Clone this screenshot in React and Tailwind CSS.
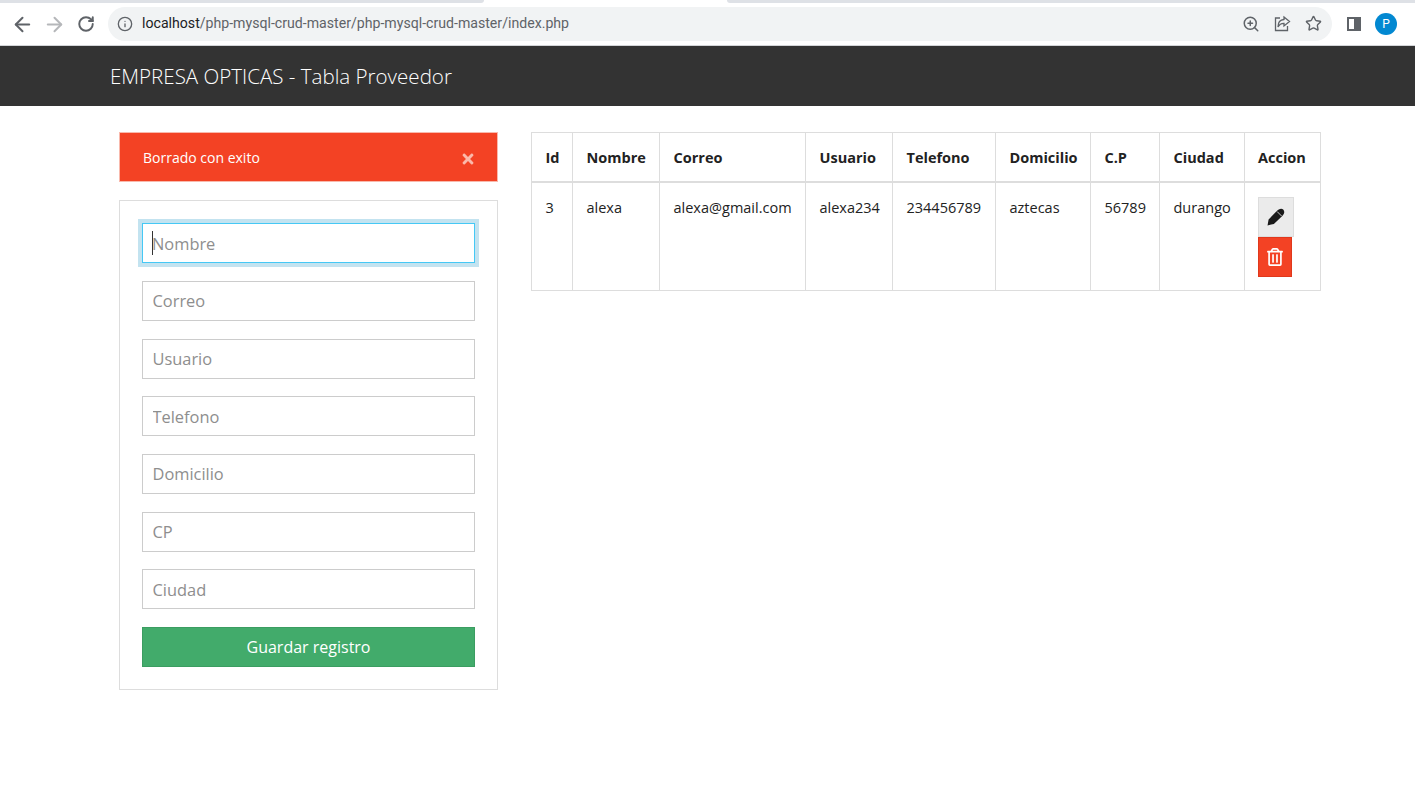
import { ArrowLeft, ArrowRight, RotateCw, Info, ZoomIn, Star } from "lucide-react";
import { FaTimes, FaRegTrashAlt } from "react-icons/fa";

const campos = ["Correo", "Usuario", "Telefono", "Domicilio", "CP", "Ciudad"];

const columnas = [
  { titulo: "Id", valor: "3", ancho: "w-[41px]" },
  { titulo: "Nombre", valor: "alexa", ancho: "w-[87px]" },
  { titulo: "Correo", valor: "alexa@gmail.com", ancho: "w-[146px]" },
  { titulo: "Usuario", valor: "alexa234", ancho: "w-[87px]" },
  { titulo: "Telefono", valor: "234456789", ancho: "w-[103px]" },
  { titulo: "Domicilio", valor: "aztecas", ancho: "w-[95px]" },
  { titulo: "C.P", valor: "56789", ancho: "w-[69px]" },
  { titulo: "Ciudad", valor: "durango", ancho: "w-[85px]" },
];

const BarraNavegador = () => {
  return (
    <div className="h-[46px] bg-white border-b border-[#d3d5d8] flex flex-col font-['Roboto',sans-serif]">
      <div className="h-[3px] flex">
        <div className="w-[484px] bg-[#dee1e6] rounded-br-md"></div>
        <div className="w-[243px]"></div>
        <div className="flex-1 bg-[#dee1e6] rounded-bl-md"></div>
      </div>
      <div className="flex-1 flex items-center">
        <div className="w-[108px] flex items-center pl-[6px]">
          <div className="w-8 flex justify-center"><ArrowLeft size={23} strokeWidth={2.1} className="text-[#5f6368]" /></div>
          <div className="w-8 flex justify-center"><ArrowRight size={23} strokeWidth={2.1} className="text-[#b5b7ba]" /></div>
          <div className="w-8 flex justify-center"><RotateCw size={18} strokeWidth={2.6} className="text-[#5f6368]" /></div>
        </div>
        <div className="w-[1224px] h-[34px] bg-[#f1f3f4] rounded-full flex items-center pl-[9px] pr-[10px] mt-[-1px]">
          <Info size={16} strokeWidth={2} className="text-[#5f6368] mr-[9px]" />
          <span className="text-[14.13px] text-[#5f6368] whitespace-nowrap">
            <span className="text-[#202124]">localhost</span>/php-mysql-crud-master/php-mysql-crud-master/index.php
          </span>
          <div className="ml-auto flex items-center gap-[14px] text-[#5f6368]">
            <ZoomIn size={18} strokeWidth={2} />
            <svg width="17" height="17" viewBox="0 0 17 17" fill="none" stroke="currentColor" strokeWidth="1.3">
              <path d="M6 3H1.500v12.500h12V11" />
              <path d="M10 2l5.500 4.500L10 11V8.300C7.500 8.200 5.300 9.500 4 12c0-4.500 2.500-7.300 6-7.500z" />
            </svg>
            <Star size={17} strokeWidth={2} />
          </div>
        </div>
        <div className="flex-1 flex items-center pl-[15px] gap-[14px] mt-[-1px]">
          <div className="w-[14px] h-[14px] border-2 border-[#5f6368] flex justify-end">
            <div className="w-[5px] bg-[#5f6368]"></div>
          </div>
          <div className="w-[22px] h-[22px] rounded-full bg-[#0288d1] text-white text-[12px] flex items-center justify-center">P</div>
        </div>
      </div>
    </div>
  );
};

const Formulario = () => {
  return (
    <div className="w-[379px] shrink-0">
      <div className="h-[50px] bg-[#f34224] border border-[#f9b9ac] flex items-center justify-between pl-[23px] pr-[21px] text-white text-[14px]">
        <span>Borrado con exito</span>
        <FaTimes size={16} className="text-[#fbb9ab] mt-[3px]" />
      </div>
      <div className="mt-[18px] h-[490px] border border-[#dddddd] pt-[22.15px] px-[22px] flex flex-col gap-[17.71px]">
        <div className="h-[40px] shrink-0 border border-[#45c8f5] shadow-[0_0_0_4px_#c3e3f0] flex items-center pl-[9px] text-[16.4px] text-[#8e8e8e]">
          <span className="w-px h-[24px] bg-[#333333] mr-[-1px]"></span>
          <span className="mt-[2px]">Nombre</span>
        </div>
        {campos.map((campo) => {
          return (
            <input
              key={campo}
              placeholder={campo}
              className="h-[40px] w-full shrink-0 border border-[#cccccc] px-[9.500px] text-[16.4px] outline-none placeholder:text-[#8e8e8e]"
            />
          );
        })}
        <button className="h-[40px] shrink-0 bg-[#42ab6b] border border-[#3b9d61] text-white text-[16px]">
          Guardar registro
        </button>
      </div>
    </div>
  );
};

const Tabla = () => {
  return (
    <table className="w-[790px] h-[159px] table-fixed border-collapse text-[14.5px] text-[#222222]">
      <thead>
        <tr className="h-[49px] border-b-2 border-[#dddddd]">
          {columnas.map((col) => {
            return (
              <th key={col.titulo} className={col.ancho + " border border-[#dddddd] px-[13.500px] pt-[2px] text-left font-bold whitespace-nowrap"}>
                {col.titulo}
              </th>
            );
          })}
          <th className="border border-[#dddddd] px-[13px] pt-[2px] text-left font-bold">Accion</th>
        </tr>
      </thead>
      <tbody>
        <tr>
          {columnas.map((col) => {
            return (
              <td key={col.titulo} className="border border-[#dddddd] px-[13.500px] pt-[14px] align-top whitespace-nowrap">
                {col.valor}
              </td>
            );
          })}
          <td className="border border-[#dddddd] px-[13px] pt-[14px] align-top">
            <div className="w-[36px] h-[40px] bg-[#ebebeb] border border-[#dddddd] flex items-center justify-center">
              <svg width="18" height="18" viewBox="0 0 17 17" fill="#1a1a1a">
                <path d="M0.500 16.500L1.500 10.800L9 3C11 0.800 13.700 0 15.300 1.400C17 3 16.400 5.600 14.400 7.500L6.500 15Z" />
                <path d="M9.600 3.400L13.800 7.600" stroke="#ebebeb" strokeWidth="0.8" fill="none" />
              </svg>
            </div>
            <div className="w-[34px] h-[40px] bg-[#f34224] border border-[#e0381c] flex items-center justify-center">
              <FaRegTrashAlt size={18} className="text-white" />
            </div>
          </td>
        </tr>
      </tbody>
    </table>
  );
};

export default function App() {
  return (
    <div className="min-h-[806px] bg-white font-['Open_Sans',sans-serif]">
      <BarraNavegador />
      <div className="h-[60px] bg-[#333333] flex items-center pl-[110px]">
        <span className="text-white text-[20.55px] font-light mt-px">EMPRESA OPTICAS - Tabla Proveedor</span>
      </div>
      <div className="flex items-start pt-[26px] pl-[119px] gap-[33px]">
        <Formulario />
        <Tabla />
      </div>
    </div>
  );
}
